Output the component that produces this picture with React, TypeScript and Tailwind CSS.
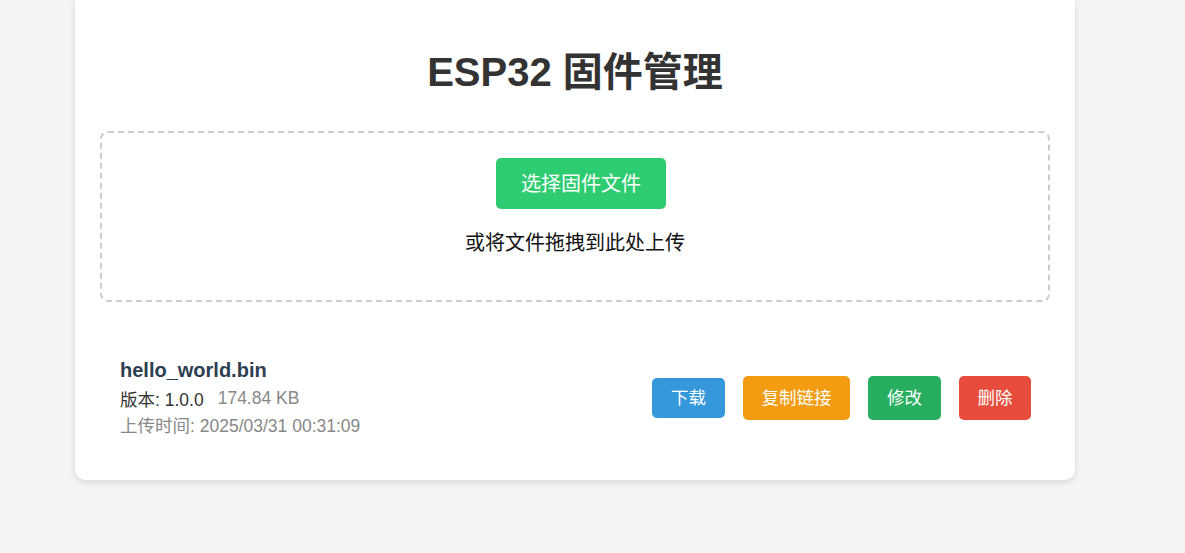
import React from "react";

const font = { fontFamily: '"Liberation Sans", Arial, "Noto Sans CJK SC", sans-serif' };

interface Firmware {
  name: string;
  version: string;
  size: string;
  uploaded: string;
}

const files: Firmware[] = [
  {
    name: "hello_world.bin",
    version: "1.0.0",
    size: "174.84 KB",
    uploaded: "2025/03/31 00:31:09",
  },
];

export default function App() {
  return (
    <div className="min-h-[553px] bg-[#f4f4f4] text-[#333]" style={font}>
      <div className="ml-[75px] w-[1000px] rounded-b-[10px] bg-white px-[25px] pb-[22px] pt-[49px] shadow-[0_2px_6px_rgba(0,0,0,0.12)]">
        <h1 className="text-center text-[40px] font-bold leading-[46px] text-[#333]">
          ESP32 固件管理
        </h1>

        {/* Upload area */}
        <div className="mt-[36px] flex flex-col items-center rounded-[8px] border-2 border-dashed border-[#ccc] px-[25px] pb-[45px] pt-[25px]">
          <button
            type="button"
            className="ml-[12px] h-[51px] rounded-[5px] bg-[#2ecc71] px-[25px] text-[20px] leading-[24px] text-white"
          >
            选择固件文件
          </button>
          <p className="mt-[22px] text-[20px] leading-[24px] text-[#111]">或将文件拖拽到此处上传</p>
        </div>

        {/* File list */}
        <div className="mt-[36px]">
          {files.map((f) => (
            <FileRow key={f.name} file={f} />
          ))}
        </div>
      </div>
    </div>
  );
}

function FileRow({ file }: { file: Firmware }) {
  return (
    <div className="flex items-center justify-between pb-[20px] pl-[20px] pr-[19px] pt-[20px]">
      <div>
        <div className="text-[20px] font-bold leading-[24px] text-[#2c3e50]">{file.name}</div>
        <div className="mt-[6px] flex items-baseline text-[17.5px] leading-[24px]">
          <span className="text-[#333]">版本: {file.version}</span>
          <span className="relative -top-[2px] ml-[14px] text-[#888]">{file.size}</span>
        </div>
        <div className="mt-[2px] text-[17.5px] leading-[24px] text-[#888]">
          上传时间: {file.uploaded}
        </div>
      </div>
      <div className="flex items-center gap-[18px]">
        <a
          href="#"
          className="flex h-[40px] w-[73px] items-center justify-center rounded-[5px] bg-[#3498db] text-[17.5px] text-white"
        >
          下载
        </a>
        <button
          type="button"
          className="h-[44px] w-[107px] rounded-[5px] bg-[#f39c12] text-[17.5px] text-white"
        >
          复制链接
        </button>
        <button
          type="button"
          className="h-[44px] w-[73px] rounded-[5px] bg-[#27ae60] text-[17.5px] text-white"
        >
          修改
        </button>
        <button
          type="button"
          className="h-[44px] w-[72px] rounded-[5px] bg-[#e74c3c] text-[17.5px] text-white"
        >
          删除
        </button>
      </div>
    </div>
  );
}
